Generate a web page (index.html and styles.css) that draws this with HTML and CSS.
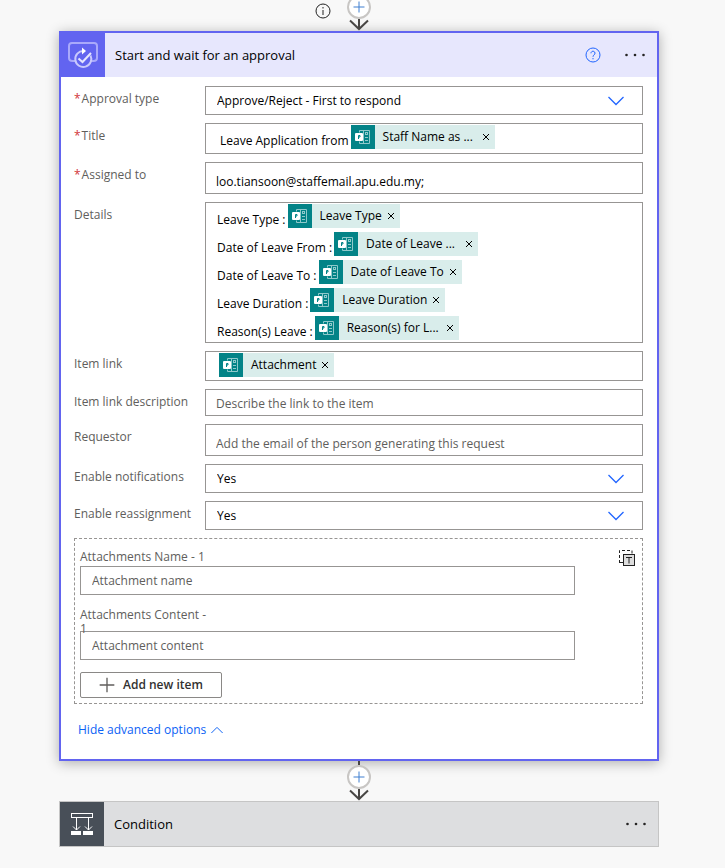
FILE: index.html
```html
<!DOCTYPE html>
<html lang="en">
<head>
    <meta charset="UTF-8">
    <meta name="viewport" content="width=device-width, initial-scale=1.0">
    <title>Start and wait for an approval</title>
    <link rel="stylesheet" href="styles.css">
</head>
<body>
    <!-- shared icons -->
    <svg class="sprite" aria-hidden="true">
        <symbol id="forms" viewBox="0 0 24 24">
            <g fill="none" stroke="#8fc9cb">
                <path d="M8.500 7.500V5.500H18.500V18.500H8.500V16.500"/>
                <rect x="14.500" y="7.500" width="2" height="2"/>
                <path d="M14 12.500h3M14 15.500h3M12.500 6v12"/>
            </g>
            <rect x="4" y="8" width="8" height="8" rx="1" fill="#fff"/>
            <path d="M7.500 14v-3.500h1.500v1.500h-1.500" fill="none" stroke="#038387"/>
        </symbol>
        <symbol id="close" viewBox="0 0 8 8">
            <path d="M1 1l6 6M7 1l-6 6" fill="none" stroke="currentColor"/>
        </symbol>
        <symbol id="chevron" viewBox="0 0 16 10">
            <path d="M.5 1l7.500 7.500L15.500 1" fill="none" stroke="currentColor" stroke-width="1.300"/>
        </symbol>
        <symbol id="plus" viewBox="0 0 12 12">
            <path d="M6 .5v11M.5 6h11" fill="none" stroke="currentColor"/>
        </symbol>
        <symbol id="arrow" viewBox="0 0 20 12">
            <path d="M10 0v10M1 1.500l9 8.500 9-8.500" fill="none" stroke="#484644" stroke-width="2"/>
        </symbol>
        <symbol id="dots" viewBox="0 0 20 4">
            <g fill="#252423"><circle cx="1.500" cy="2" r="1.300"/><circle cx="10" cy="2" r="1.300"/><circle cx="18.500" cy="2" r="1.300"/></g>
        </symbol>
    </svg>

    <main class="flow">
        <div class="connector connector-top">
            <svg class="info" viewBox="0 0 16 16" role="img" aria-label="Info">
                <circle cx="8" cy="8" r="7" fill="none" stroke="#222"/>
                <path d="M8 7v5M8 4v1.500" stroke="#222" fill="none"/>
            </svg>
            <div class="connector-line">
                <button class="add-step" aria-label="Insert a step"><svg><use href="#plus"/></svg></button>
                <svg class="arrow"><use href="#arrow"/></svg>
            </div>
        </div>

        <section class="card">
            <header class="card-header">
                <div class="card-icon">
                    <svg viewBox="0 0 32 28" width="32" height="28" fill="none">
                        <path d="M8 20H5.500Q2 20 2 17V5q0-3 3-3h22q3 0 3 3v12q0 3-3.500 3H24" stroke="#a9a9fb" stroke-width="2"/>
                        <path d="M16.500 10a8 8 0 1 0 7 4.500" stroke="#c9c9fd" stroke-width="2"/>
                        <path d="M15 6.500l4 3.500-4 3.500z" fill="#fff"/>
                        <path d="M11.500 17.500l4 3.500 8.500-9" stroke="#e5e5ff" stroke-width="2"/>
                    </svg>
                </div>
                <h1 class="card-title">Start and wait for an approval</h1>
                <button class="icon-button help" aria-label="Help">
                    <svg viewBox="0 0 16 16" width="16" height="16" fill="none" stroke="#2266ff">
                        <circle cx="8" cy="8" r="7"/>
                        <path d="M6 6.300a2 2 0 1 1 3.200 1.500Q8 8.500 8 9.800M8 11v1.300"/>
                    </svg>
                </button>
                <button class="icon-button more" aria-label="More commands"><svg width="20" height="4"><use href="#dots"/></svg></button>
            </header>

            <form class="card-body">
                <div class="row">
                    <label class="required" for="type">Approval type</label>
                    <div class="select">
                        <select id="type"><option>Approve/Reject - First to respond</option></select>
                        <svg><use href="#chevron"/></svg>
                    </div>
                </div>
                <div class="row">
                    <span class="label required" id="title-label">Title</span>
                    <div class="token-box title-box" role="textbox" aria-labelledby="title-label">
                        <div class="token-row">
                            <span class="token-text">Leave Application from</span>
                            <span class="token token-long"><svg class="token-icon"><use href="#forms"/></svg><span>Staff Name as ...</span><button type="button" aria-label="Remove"><svg><use href="#close"/></svg></button></span>
                        </div>
                    </div>
                </div>
                <div class="row">
                    <label class="required" for="assigned">Assigned to</label>
                    <input class="tall" id="assigned" type="text" value="loo.tiansoon@staffemail.apu.edu.my;">
                </div>
                <div class="row">
                    <span class="label" id="details-label">Details</span>
                    <div class="token-box details-box" role="textbox" aria-multiline="true" aria-labelledby="details-label">
                        <div class="token-row">
                            <span class="token-text">Leave Type :</span>
                            <span class="token"><svg class="token-icon"><use href="#forms"/></svg><span>Leave Type</span><button type="button" aria-label="Remove"><svg><use href="#close"/></svg></button></span>
                        </div>
                        <div class="token-row">
                            <span class="token-text">Date of Leave From :</span>
                            <span class="token token-long"><svg class="token-icon"><use href="#forms"/></svg><span>Date of Leave ...</span><button type="button" aria-label="Remove"><svg><use href="#close"/></svg></button></span>
                        </div>
                        <div class="token-row">
                            <span class="token-text">Date of Leave To :</span>
                            <span class="token"><svg class="token-icon"><use href="#forms"/></svg><span>Date of Leave To</span><button type="button" aria-label="Remove"><svg><use href="#close"/></svg></button></span>
                        </div>
                        <div class="token-row">
                            <span class="token-text">Leave Duration :</span>
                            <span class="token"><svg class="token-icon"><use href="#forms"/></svg><span>Leave Duration</span><button type="button" aria-label="Remove"><svg><use href="#close"/></svg></button></span>
                        </div>
                        <div class="token-row">
                            <span class="token-text">Reason(s) Leave :</span>
                            <span class="token token-long"><svg class="token-icon"><use href="#forms"/></svg><span>Reason(s) for L...</span><button type="button" aria-label="Remove"><svg><use href="#close"/></svg></button></span>
                        </div>
                    </div>
                </div>
                <div class="row">
                    <span class="label" id="link-label">Item link</span>
                    <div class="token-box link-box" role="textbox" aria-labelledby="link-label">
                        <div class="token-row">
                            <span class="token"><svg class="token-icon"><use href="#forms"/></svg><span>Attachment</span><button type="button" aria-label="Remove"><svg><use href="#close"/></svg></button></span>
                        </div>
                    </div>
                </div>
                <div class="row">
                    <label for="description">Item link description</label>
                    <input class="short" id="description" type="text" placeholder="Describe the link to the item">
                </div>
                <div class="row">
                    <label for="requestor">Requestor</label>
                    <input class="tall" id="requestor" type="text" placeholder="Add the email of the person generating this request">
                </div>
                <div class="row">
                    <label for="notifications">Enable notifications</label>
                    <div class="select">
                        <select id="notifications"><option>Yes</option><option>No</option></select>
                        <svg><use href="#chevron"/></svg>
                    </div>
                </div>
                <div class="row">
                    <label for="reassignment">Enable reassignment</label>
                    <div class="select">
                        <select id="reassignment"><option>Yes</option><option>No</option></select>
                        <svg><use href="#chevron"/></svg>
                    </div>
                </div>

                <div class="attachments">
                    <div class="attachment-fields">
                        <label for="att-name">Attachments Name - 1</label>
                        <input id="att-name" type="text" placeholder="Attachment name">
                        <label class="content-label" for="att-content">Attachments Content - 1</label>
                        <input id="att-content" type="text" placeholder="Attachment content">
                        <button class="add-item" type="button"><svg><use href="#plus"/></svg>Add new item</button>
                    </div>
                    <button class="icon-button switch" type="button" aria-label="Switch to input entire array">
                        <svg viewBox="0 0 16 16" width="16" height="16" fill="none" stroke="#222">
                            <path d="M.5 13V.5H13V4" stroke-dasharray="3 2"/>
                            <path d="M1 12.500h3"/>
                            <rect x="4.500" y="4.500" width="11" height="11" fill="#ddd"/>
                            <path d="M7 7.500h6M10 7.500v6"/>
                        </svg>
                    </button>
                </div>
            </form>

            <a class="advanced" href="#">Hide advanced options <svg><use href="#chevron"/></svg></a>
        </section>

        <div class="connector">
            <div class="connector-line">
                <button class="add-step" aria-label="Insert a step"><svg><use href="#plus"/></svg></button>
                <svg class="arrow"><use href="#arrow"/></svg>
            </div>
        </div>

        <section class="card-header condition">
            <div class="card-icon">
                <svg viewBox="0 0 24 24" width="24" height="24" fill="none" stroke="#fff">
                    <rect x="1.500" y="1.500" width="21" height="4"/>
                    <path d="M6.500 6v12M18.500 6v12M3 14.500l3.500 3.500 3.500-3.500M15 14.500l3.500 3.500 3.500-3.500"/>
                    <path d="M1 19h10v4H1zM13 19h10v4H13z" fill="#fff" stroke="none"/>
                </svg>
            </div>
            <h2 class="card-title">Condition</h2>
            <button class="icon-button more" aria-label="More commands"><svg width="20" height="4"><use href="#dots"/></svg></button>
        </section>
    </main>
</body>
</html>
```
FILE: styles.css
```css
* {
    box-sizing: border-box;
}
body {
    margin: 0;
    background: #f8f8f8;
    color: #000;
    font-family: "Segoe UI", "Open Sans", "Noto Sans", sans-serif;
    font-size: 12px;
    line-height: 16px;
}
button, input, select {
    font: inherit;
    color: inherit;
}
button {
    padding: 0;
    border: none;
    background: none;
    cursor: pointer;
}
svg {
    display: block;
    flex-shrink: 0;
}
.sprite {
    display: none;
}
.flow {
    padding: 0 66px 20px 59px;
    overflow: hidden;
}

/* connectors */
.connector {
    display: grid;
    grid-template-columns: 1fr 24px 1fr;
    column-gap: 16px;
    height: 40px;
}
.connector-top {
    margin-top: -9px;
}
.connector-line {
    grid-column: 2;
    display: flex;
    flex-direction: column;
    align-items: center;
}
.connector-line::before {
    content: "";
    width: 2px;
    height: 4px;
    background: #484644;
}
.add-step {
    display: flex;
    align-items: center;
    justify-content: center;
    width: 24px;
    height: 24px;
    border: 2px solid #c8c6c4;
    border-radius: 50%;
    background: #fff;
    color: #3f7fd0;
}
.add-step svg {
    width: 12px;
    height: 12px;
}
.arrow {
    width: 20px;
    height: 12px;
}
.info {
    grid-column: 1;
    justify-self: end;
    width: 16px;
    height: 16px;
    margin-top: 12px;
}

/* card */
.card {
    border: 2px solid #6264f0;
    background: #fff;
    box-shadow: 0 2px 12px rgba(0, 0, 0, 0.3);
}
.card-header {
    display: flex;
    align-items: center;
    height: 44px;
    padding-right: 12px;
    background: #e7e7fd;
}
.card-icon {
    display: flex;
    align-items: center;
    justify-content: center;
    width: 44px;
    height: 44px;
    background: #6264f0;
}
.card-title {
    flex: 1;
    margin: 0 0 0 10px;
    font-size: 13px;
    font-weight: 400;
    line-height: 20px;
}
.help {
    margin-right: 24px;
}
.condition {
    height: 46px;
    border: 1px solid #c5c5c5;
    background: #dddee0;
}
.condition .card-icon {
    background: #484f58;
}
.card-body {
    display: flex;
    flex-direction: column;
    gap: 8px;
    padding: 9px 14px 0 13px;
}

/* fields */
.row {
    display: grid;
    grid-template-columns: 131px 1fr;
    align-items: start;
}
.row > label, .label {
    padding-top: 5px;
    color: #605e5c;
}
.required::before {
    content: "*";
    margin-right: 1px;
    color: #d13438;
}
input, select, .token-box {
    width: 100%;
    height: 29px;
    border: 1px solid #979593;
    border-radius: 0;
    background: #fff;
    padding: 0 11px;
    outline: none;
}
input::placeholder {
    color: #605e5c;
    opacity: 1;
}
.short {
    height: 27px;
    padding: 2px 10px 0;
}
.tall {
    height: 32px;
    padding: 7px 10px 0;
}
.select {
    display: grid;
    align-items: center;
}
.select select {
    grid-area: 1 / 1;
    appearance: none;
}
.select svg {
    grid-area: 1 / 1;
    justify-self: end;
    width: 16px;
    height: 10px;
    margin-right: 19px;
    color: #2266ff;
    pointer-events: none;
}

/* tokens */
.token-box {
    display: flex;
    flex-direction: column;
    gap: 4px;
    height: auto;
}
.title-box {
    padding: 1px 14px 4px;
}
.details-box {
    padding-top: 1px;
    padding-bottom: 2px;
}
.link-box {
    padding: 1px 13px 3px;
}
.token-row {
    display: flex;
    gap: 2px;
    white-space: nowrap;
}
.token-text {
    padding-top: 8px;
}
.token {
    display: flex;
    align-items: center;
    height: 24px;
    padding-right: 5px;
    background: #d9edeb;
}
.token-long {
    width: 144px;
}
.token-long button {
    margin-left: auto;
}
.token-icon {
    width: 24px;
    height: 24px;
    margin-right: 8px;
    background: #038387;
}
.token button {
    padding-left: 5px;
}
.token button svg {
    width: 8px;
    height: 8px;
}

/* attachments */
.attachments {
    display: flex;
    justify-content: space-between;
    align-items: flex-start;
    border: 1px dashed #979593;
    padding: 11px 7px 5px 5px;
}
.attachment-fields {
    display: flex;
    flex-direction: column;
    align-items: flex-start;
    width: 495px;
}
.attachment-fields label {
    z-index: 1;
    width: 131px;
    height: 16px;
    line-height: 14px;
    color: #605e5c;
}
.attachment-fields .content-label {
    height: 23px;
    margin-top: 13px;
}
.add-item {
    display: flex;
    align-items: center;
    height: 26px;
    margin-top: 12px;
    padding: 0 18px;
    border: 1px solid #8a8886;
    border-radius: 2px;
    color: #323130;
    font-weight: 600;
}
.add-item svg {
    width: 16px;
    height: 16px;
    margin-right: 8px;
    color: #605e5c;
}
.advanced {
    display: flex;
    align-items: center;
    gap: 5px;
    padding: 18px 17px 21px;
    color: #0b62f5;
    text-decoration: none;
}
.advanced svg {
    width: 12px;
    height: 8px;
    transform: rotate(180deg);
}
```
